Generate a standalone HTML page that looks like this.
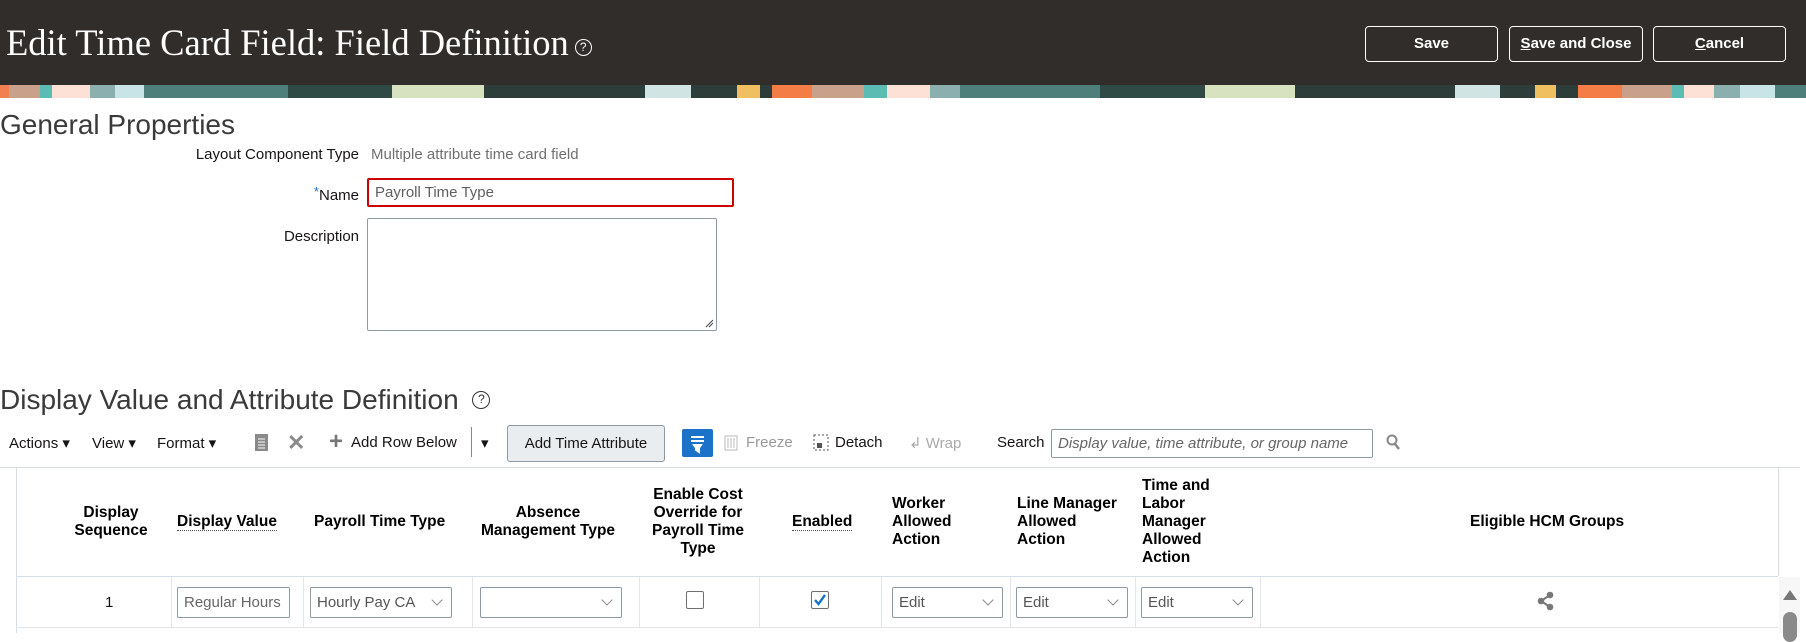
<!DOCTYPE html>
<html><head><meta charset="utf-8"><style>
*{box-sizing:border-box;margin:0;padding:0}
body{width:1806px;height:633px;overflow:hidden;background:#fff;font-family:"Liberation Sans",Arial,sans-serif;color:#161513;position:relative}
.abs{position:absolute}
.hdr{left:0;top:0;width:1806px;height:85px;background:#312d2a}
.banner{left:0;top:85px;width:1806px;height:13px;background:linear-gradient(90deg,#f08050 0,#f08050 9px,#c9a08a 9px,#c9a08a 40px,#5bbcb4 40px,#5bbcb4 52px,#fde0d6 52px,#fde0d6 90px,#8aafae 90px,#8aafae 115px,#c8e4e6 115px,#c8e4e6 144px,#4f7f7a 144px,#4f7f7a 288px,#2f4a45 288px,#2f4a45 392px,#d7e3c0 392px,#d7e3c0 484px,#2d3e3a 484px,#2d3e3a 645px,#d0e4e4 645px,#d0e4e4 691px,#2d3e3a 691px,#2d3e3a 737px,#f0c060 737px,#f0c060 760px,#2d3e3a 760px,#2d3e3a 772px,#f47c45 772px,#f47c45 812px,#c9a08a 812px,#c9a08a 864px,#5bbcb4 864px,#5bbcb4 887px,#fde0d6 887px,#fde0d6 930px,#8aafae 930px,#8aafae 960px,#4f7f7a 960px,#4f7f7a 1100px,#2f4a45 1100px,#2f4a45 1205px,#d7e3c0 1205px,#d7e3c0 1295px,#2d3e3a 1295px,#2d3e3a 1455px,#d0e4e4 1455px,#d0e4e4 1500px,#2d3e3a 1500px,#2d3e3a 1535px,#f0c060 1535px,#f0c060 1556px,#2d3e3a 1556px,#2d3e3a 1578px,#f47c45 1578px,#f47c45 1622px,#c9a08a 1622px,#c9a08a 1672px,#5bbcb4 1672px,#5bbcb4 1684px,#fde0d6 1684px,#fde0d6 1714px,#8aafae 1714px,#8aafae 1740px,#c8e4e6 1740px,#c8e4e6 1775px,#4f7f7a 1775px)}
.title{left:6px;top:25px;font-family:"Liberation Serif",serif;font-size:36.5px;line-height:1;color:#fff;white-space:nowrap}
.q{display:inline-block;width:17px;height:17px;border:1.5px solid #fff;border-radius:50%;font-family:"Liberation Sans",sans-serif;font-size:12px;text-align:center;line-height:14px;vertical-align:4px;margin-left:6px}
.btn{top:26px;height:36px;border:1px solid #fff;border-radius:4px;color:#fff;font-weight:bold;font-size:15px;text-align:center;line-height:34px}
.h1{font-size:28px;font-weight:300;color:#3a3a3a;left:0}
.lbl{font-size:15px;text-align:right;color:#161513}
.val{font-size:15px;color:#6f6f6f}
.tb{top:434px;font-size:15px}
.th{font-size:15.5px;font-weight:bold;line-height:18px;color:#000}
.ul{border-bottom:1px dotted #555}
.sel{height:31px;border:1px solid #8d9aa3;border-radius:2px;font-size:15px;color:#555;padding:6px 6px;background:#fff}
.chev{position:absolute;right:10px;top:8px;width:8px;height:8px;border-right:1.3px solid #888;border-bottom:1.3px solid #888;transform:rotate(45deg)}
.cb{width:18px;height:18px;border:1px solid #6f6f6f;border-radius:2px;background:#fff}
.vl{width:1px;background:#e4e7ea}
</style></head><body>
<div class="abs hdr"></div>
<div class="abs banner"></div>
<div class="abs title">Edit Time Card Field: Field Definition<span class="q">?</span></div>
<div class="abs btn" style="left:1365px;width:133px">Save</div>
<div class="abs btn" style="left:1509px;width:134px"><u>S</u>ave and Close</div>
<div class="abs btn" style="left:1653px;width:133px"><u>C</u>ancel</div>

<div class="abs h1" style="top:109px">General Properties</div>
<div class="abs lbl" style="right:1447px;top:146px;font-weight:normal">Layout Component Type</div>
<div class="abs val" style="left:371px;top:146px">Multiple attribute time card field</div>
<div class="abs lbl" style="right:1447px;top:184px"><span style="color:#1a73c8;font-size:13px;vertical-align:4px">*</span>Name</div>
<div class="abs" style="left:367px;top:178px;width:367px;height:29px;border:2px solid #c00;border-radius:2px;font-size:15px;color:#5f5f5f;padding:4px 6px">Payroll Time Type</div>
<div class="abs lbl" style="right:1447px;top:228px">Description</div>
<div class="abs" style="left:367px;top:218px;width:350px;height:113px;border:1px solid #8d9aa3;border-radius:2px"><svg style="position:absolute;right:2px;bottom:2px" width="10" height="10"><path d="M2 9L9 2M5 9L9 5" stroke="#444" stroke-width="1"/></svg></div>

<div class="abs h1" style="top:384px">Display Value and Attribute Definition <span class="q" style="border-color:#333;color:#333;width:18px;height:18px;vertical-align:6px">?</span></div>

<div class="abs tb" style="left:9px">Actions ▾</div>
<div class="abs tb" style="left:92px">View ▾</div>
<div class="abs tb" style="left:157px">Format ▾</div>
<svg class="abs" style="left:254px;top:433px" width="16" height="20"><rect x="1" y="1" width="13" height="17" fill="#8a8a8a"/><path d="M4 6h7M4 9h7M4 12h7M4 15h7" stroke="#fff"/></svg>
<div class="abs tb" style="left:287px;top:430px;font-size:22px;font-weight:bold;color:#8a8a8a">✕</div>
<div class="abs tb" style="left:329px;top:428px;font-size:24px;font-weight:bold;color:#777">+</div>
<div class="abs tb" style="left:351px">Add Row Below</div>
<div class="abs vl" style="left:471px;top:427px;height:30px;background:#888"></div>
<div class="abs tb" style="left:481px">▾</div>
<div class="abs" style="left:507px;top:425px;width:158px;height:37px;border:1px solid #8d9aa3;border-radius:3px;background:#e9edf0;font-size:15px;text-align:center;line-height:36px">Add Time Attribute</div>
<div class="abs" style="left:682px;top:429px;width:31px;height:28px;background:#1a73c8;border-radius:2px"><svg width="31" height="28"><path d="M9 8h13M9 12h13M12 16h7l-2 3v4l-3-2v-2z" stroke="#fff" stroke-width="2" fill="#fff"/></svg></div>
<svg class="abs" style="left:724px;top:435px" width="14" height="16"><rect x="1" y="1" width="12" height="14" fill="none" stroke="#bbb"/><path d="M4 3v10M7 3v10M10 3v10" stroke="#bbb"/></svg>
<div class="abs tb" style="left:746px;color:#999">Freeze</div>
<svg class="abs" style="left:813px;top:434px" width="16" height="17"><rect x="1" y="1" width="14" height="15" fill="none" stroke="#555" stroke-dasharray="2 2"/><rect x="4" y="9" width="5" height="5" fill="#555"/></svg>
<div class="abs tb" style="left:835px">Detach</div>
<div class="abs tb" style="left:909px;color:#aaa">↲ Wrap</div>
<div class="abs tb" style="left:997px">Search</div>
<div class="abs" style="left:1051px;top:429px;width:322px;height:29px;border:1px solid #8d9aa3;border-radius:2px;font-size:15px;color:#666;font-style:italic;padding:5px 6px;white-space:nowrap;overflow:hidden">Display value, time attribute, or group name</div>
<svg class="abs" style="left:1386px;top:434px" width="16" height="18"><circle cx="6" cy="6" r="4.5" fill="none" stroke="#888" stroke-width="2"/><path d="M9 10l4 5" stroke="#888" stroke-width="2.5"/></svg>

<div class="abs" style="left:0;top:467px;width:1800px;height:1px;background:#d6dfe6"></div>
<div class="abs vl" style="left:16px;top:468px;height:165px;background:#d6dfe6"></div>
<div class="abs vl" style="left:1778px;top:468px;height:108px;background:#d6dfe6"></div>
<div class="abs" style="left:16px;top:576px;width:1762px;height:1px;background:#d6dfe6"></div>
<div class="abs" style="left:16px;top:627px;width:1762px;height:1px;background:#e4e7ea"></div>
<div class="abs vl" style="left:171px;top:577px;height:50px"></div>
<div class="abs vl" style="left:303px;top:577px;height:50px"></div>
<div class="abs vl" style="left:472px;top:577px;height:50px"></div>
<div class="abs vl" style="left:639px;top:577px;height:50px"></div>
<div class="abs vl" style="left:759px;top:577px;height:50px"></div>
<div class="abs vl" style="left:881px;top:577px;height:50px"></div>
<div class="abs vl" style="left:1010px;top:577px;height:50px"></div>
<div class="abs vl" style="left:1135px;top:577px;height:50px"></div>
<div class="abs vl" style="left:1260px;top:577px;height:50px"></div>

<div class="abs th" style="left:61px;width:100px;top:504px;text-align:center">Display<br>Sequence</div>
<div class="abs th" style="left:177px;top:513px"><span class="ul">Display Value</span></div>
<div class="abs th" style="left:314px;top:513px">Payroll Time Type</div>
<div class="abs th" style="left:478px;width:140px;top:504px;text-align:center">Absence<br>Management Type</div>
<div class="abs th" style="left:638px;width:120px;top:486px;text-align:center">Enable Cost<br>Override for<br>Payroll Time<br>Type</div>
<div class="abs th" style="left:792px;top:513px"><span class="ul">Enabled</span></div>
<div class="abs th" style="left:892px;top:495px">Worker<br>Allowed<br>Action</div>
<div class="abs th" style="left:1017px;top:495px">Line Manager<br>Allowed<br>Action</div>
<div class="abs th" style="left:1142px;top:477px">Time and<br>Labor<br>Manager<br>Allowed<br>Action</div>
<div class="abs th" style="left:1470px;top:513px">Eligible HCM Groups</div>

<div class="abs" style="left:105px;top:594px;font-size:15px">1</div>
<div class="abs sel" style="left:177px;top:587px;width:113px;overflow:hidden;white-space:nowrap;color:#666">Regular Hours</div>
<div class="abs sel" style="left:310px;top:587px;width:142px">Hourly Pay CA<span class="chev"></span></div>
<div class="abs sel" style="left:480px;top:587px;width:142px"><span class="chev"></span></div>
<div class="abs cb" style="left:686px;top:591px"></div>
<div class="abs cb" style="left:811px;top:591px"><svg width="16" height="16"><path d="M3 8l3.5 4L13 3" stroke="#1a73c8" stroke-width="2.4" fill="none"/></svg></div>
<div class="abs sel" style="left:892px;top:587px;width:111px">Edit<span class="chev"></span></div>
<div class="abs sel" style="left:1016px;top:587px;width:112px">Edit<span class="chev"></span></div>
<div class="abs sel" style="left:1141px;top:587px;width:112px">Edit<span class="chev"></span></div>
<svg class="abs" style="left:1537px;top:591px" width="18" height="20"><circle cx="13" cy="4" r="3.3" fill="#777"/><circle cx="4" cy="10" r="3.3" fill="#777"/><circle cx="13" cy="16" r="3.3" fill="#777"/><path d="M13 4L4 10L13 16" stroke="#777" stroke-width="2" fill="none"/></svg>
<div class="abs" style="left:1779px;top:577px;width:21px;height:56px;background:#f7f7f7"></div>
<div class="abs" style="left:1783px;top:590px;width:0;height:0;border-left:7px solid transparent;border-right:7px solid transparent;border-bottom:10px solid #777"></div>
<div class="abs" style="left:1783px;top:612px;width:14px;height:30px;background:#8a8a8a;border-radius:7px"></div>
</body></html>
